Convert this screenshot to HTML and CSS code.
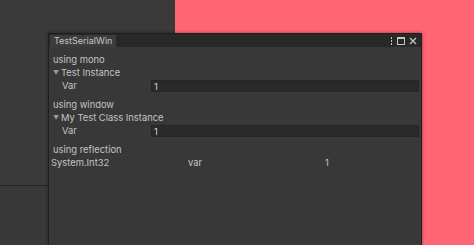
FILE: index.html
```html
<!DOCTYPE html>
<html lang="en">
<head>
    <meta charset="UTF-8">
    <title>TestSerialWin</title>
    <link rel="stylesheet" href="styles.css">
</head>
<body>
    <div class="desk">
        <div class="left-pane">
            <div class="left-top"></div>
            <div class="left-bottom"></div>
        </div>
        <div class="scene"></div>
    </div>

    <div class="window">
        <div class="tabbar">
            <div class="tab">TestSerialWin</div>
            <div class="win-icons">
                <svg width="3" height="8" viewBox="0 0 3 8"><rect x="1" y="0" width="1" height="2" fill="#c4c4c4"/><rect x="1" y="3" width="1" height="2" fill="#c4c4c4"/><rect x="1" y="6" width="1" height="2" fill="#c4c4c4"/></svg>
                <svg width="8" height="8" viewBox="0 0 8 8"><rect x="0.5" y="0.5" width="7" height="7" fill="none" stroke="#c4c4c4"/><rect x="0" y="0" width="8" height="2" fill="#c4c4c4"/></svg>
                <svg width="8" height="8" viewBox="0 0 8 8"><path d="M1 1 L7 7 M7 1 L1 7" stroke="#c4c4c4" stroke-width="1.3"/></svg>
            </div>
        </div>
        <div class="content">
            <div class="group">
                <div class="row">using mono</div>
                <div class="row"><span class="fold">&#9660;</span>Test Instance</div>
                <div class="row field">
                    <span class="label">Var</span>
                    <span class="input">1</span>
                </div>
            </div>
            <div class="group">
                <div class="row">using window</div>
                <div class="row"><span class="fold">&#9660;</span>My Test Class Instance</div>
                <div class="row field">
                    <span class="label">Var</span>
                    <span class="input">1</span>
                </div>
            </div>
            <div class="group">
                <div class="row">using reflection</div>
                <div class="row refl">
                    <span class="c-type">System.Int32</span>
                    <span class="c-name">var</span>
                    <span class="c-val">1</span>
                </div>
            </div>
        </div>
    </div>
</body>
</html>
```

FILE: styles.css
```css
body {
    margin: 0;
    padding: 0;
    width: 474px;
    height: 245px;
    overflow: hidden;
    background-color: #3a3a3a;
    font-family: Inter, "Noto Sans", sans-serif;
    font-size: 9.4px;
    color: #c4c4c4;
}
.desk {
    display: grid;
    grid-template-columns: 175px 1fr;
    height: 245px;
}
.left-pane {
    display: flex;
    flex-direction: column;
}
.left-top {
    height: 185px;
    background-color: #3a3a3a;
    border-bottom: 1px solid #232323;
}
.left-bottom {
    flex: 1;
    background-color: #393939;
}
.scene {
    background-color: #ff6574;
}
.window {
    position: absolute;
    left: 48px;
    top: 33px;
    width: 372px;
    height: 220px;
    background-color: #383838;
    border: 1px solid #1f1f1f;
    box-shadow: 0 0 3px rgba(0, 0, 0, 0.45);
}
.tabbar {
    display: flex;
    align-items: flex-end;
    height: 13px;
    background-color: #282828;
}
.tab {
    height: 12px;
    line-height: 12px;
    margin-left: 1px;
    padding: 0 4px 0 4px;
    background-color: #3c3c3c;
    color: #c4c4c4;
    font-size: 9px;
}
.win-icons {
    margin-left: auto;
    align-self: center;
    display: flex;
    align-items: center;
    gap: 4px;
    padding-right: 4px;
}
.win-icons svg {
    display: block;
}
.content {
    padding: 6px 2px 0 4px;
}
.group {
    margin-bottom: 6px;
}
.row {
    display: flex;
    align-items: center;
    height: 13px;
    white-space: nowrap;
}
.fold {
    font-size: 6px;
    color: #9a9a9a;
    width: 8px;
}
.field {
    padding-left: 9px;
}
.label {
    width: 89px;
}
.input {
    flex: 1;
    height: 12px;
    line-height: 12px;
    padding-left: 2px;
    background-color: #2a2a2a;
    border: 1px solid #262626;
    box-sizing: border-box;
    color: #d2d2d2;
}
.refl {
    margin-left: -2px;
}
.c-type {
    width: 137px;
}
.c-name {
    width: 137px;
}
```
